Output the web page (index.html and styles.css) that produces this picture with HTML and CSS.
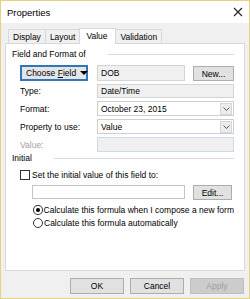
FILE: index.html
```html
<!DOCTYPE html>
<html lang="en">
<head>
  <meta charset="UTF-8">
  <title>Properties</title>
  <link rel="stylesheet" href="styles.css">
</head>
<body>
  <div class="window">
    <div class="titlebar">
      <span class="title">Properties</span>
      <svg class="close" width="10" height="10" viewBox="0 0 10 10">
        <path d="M1 1 L9 9 M9 1 L1 9" stroke="#222" stroke-width="1.1" fill="none"/>
      </svg>
    </div>

    <div class="content">
      <div class="tabs">
        <div class="tab">Display</div>
        <div class="tab">Layout</div>
        <div class="tab active">Value</div>
        <div class="tab">Validation</div>
      </div>

      <div class="panel">
        <div class="group-title"><span>Field and Format of</span><i class="rule"></i></div>

        <div class="fields">
          <div class="choose"><span>Choose <u>F</u>ield</span><span class="tri"></span></div>
          <div class="box grey">DOB</div>
          <div class="btn">New...</div>

          <div class="label">Type:</div>
          <div class="box grey wide">Date/Time</div>

          <div class="label">Format:</div>
          <div class="box select wide">October 23, 2015<span class="arrow"><svg width="7" height="4" viewBox="0 0 7 4"><path d="M0.5 0.5 L3.5 3.5 L6.5 0.5" stroke="#555" fill="none"/></svg></span></div>

          <div class="label">Property to use:</div>
          <div class="box select wide">Value<span class="arrow"><svg width="7" height="4" viewBox="0 0 7 4"><path d="M0.5 0.5 L3.5 3.5 L6.5 0.5" stroke="#555" fill="none"/></svg></span></div>

          <div class="label disabled">Value:</div>
          <div class="box disabled-box wide"></div>
        </div>

        <div class="group-title initial"><span>Initial</span><i class="rule"></i></div>

        <div class="check-row"><span class="checkbox"></span><span>Set the initial value of this field to:</span></div>

        <div class="formula-row">
          <div class="box white"></div>
          <div class="btn edit">Edit...</div>
        </div>

        <div class="radio-row"><span class="radio on"></span><span>Calculate this formula when I compose a new form</span></div>
        <div class="radio-row"><span class="radio"></span><span>Calculate this formula automatically</span></div>
      </div>

      <div class="footer">
        <div class="btn big">OK</div>
        <div class="btn big">Cancel</div>
        <div class="btn big off">Apply</div>
      </div>
    </div>
  </div>
</body>
</html>
```

FILE: styles.css
```css
* {
  box-sizing: border-box;
}
body {
  margin: 0;
  font-family: "Liberation Sans", Arial, sans-serif;
  font-size: 8.5px;
  color: #000;
  white-space: nowrap;
}
.window {
  width: 250px;
  height: 299px;
  border: 1px solid #e6d27c;
  background: #f0f0f0;
  display: flex;
  flex-direction: column;
}
.titlebar {
  height: 22px;
  background: #fff;
  display: flex;
  align-items: center;
  justify-content: space-between;
  padding: 0 6px 0 6px;
}
.title {
  font-size: 9.5px;
}
.content {
  flex: 1;
  padding: 5px 4px 0 4px;
}
.tabs {
  display: flex;
  align-items: flex-end;
  height: 15px;
  padding-left: 3px;
}
.tab {
  height: 14px;
  padding: 2px 4px 0 4px;
  border: 1px solid #d9d9d9;
  border-bottom: none;
  margin-right: -1px;
  background: #f0f0f0;
}
.tab.active {
  height: 16px;
  width: 37px;
  background: #fff;
  padding: 2px 0 0 6px;
  position: relative;
  z-index: 1;
  margin-bottom: -1px;
}
.panel {
  height: 228px;
  background: #fff;
  border: 1px solid #d9d9d9;
  padding: 4px 10px 0 6px;
}
.group-title {
  display: flex;
  align-items: center;
  height: 12px;
}
.group-title .rule {
  flex: 1;
  border-top: 1px solid #dcdcdc;
  margin-left: 22px;
}
.fields {
  display: grid;
  grid-template-columns: 69px 88px 41px;
  grid-template-rows: 16px 14px 15px 15px 15px;
  column-gap: 8px;
  row-gap: 3px;
  margin: 5px 0 0 8px;
}
.label {
  display: flex;
  align-items: center;
}
.label.disabled {
  color: #a0a0a0;
}
.choose {
  width: 68px;
  border: 2px solid #2f77b8;
  background: #e5e5e5;
  display: flex;
  align-items: center;
  padding-left: 4px;
}
.tri {
  width: 0;
  height: 0;
  border-left: 4px solid transparent;
  border-right: 4px solid transparent;
  border-top: 4px solid #000;
  margin-left: 4px;
}
.box {
  border: 1px solid #d4d4d4;
  display: flex;
  align-items: center;
  padding-left: 3px;
}
.box.grey {
  background: #f0f0f0;
}
.box.wide {
  grid-column: 2 / 4;
}
.box.select {
  background: #fff;
  border-color: #cfcfcf;
  justify-content: space-between;
  padding-right: 1px;
}
.arrow {
  width: 12px;
  height: 12px;
  background: #ececec;
  border: 1px solid #d6d6d6;
  display: flex;
  align-items: center;
  justify-content: center;
}
.box.disabled-box {
  background: #f0f0f0;
  border-color: #c9dbea;
}
.btn {
  background: #e1e1e1;
  border: 1px solid #adadad;
  display: flex;
  align-items: center;
  justify-content: center;
  height: 15px;
  margin-top: 1px;
}
.check-row {
  display: flex;
  align-items: center;
  margin: 5px 0 0 8px;
  height: 12px;
}
.checkbox {
  width: 10px;
  height: 10px;
  border: 1px solid #333;
  margin-right: 2px;
}
.formula-row {
  display: flex;
  margin: 4px 0 0 20px;
  height: 15px;
}
.formula-row .box {
  width: 153px;
  height: 14px;
  border-color: #c4c4c4;
}
.btn.edit {
  width: 39px;
  margin: 0 0 0 8px;
}
.radio-row {
  display: flex;
  align-items: center;
  height: 13px;
  margin-left: 21px;
}
.formula-row + .radio-row {
  margin-top: 3px;
}
.radio {
  width: 10px;
  height: 10px;
  border: 1px solid #333;
  border-radius: 50%;
  margin-right: 1px;
  display: flex;
  align-items: center;
  justify-content: center;
}
.radio.on::after {
  content: "";
  width: 4px;
  height: 4px;
  border-radius: 50%;
  background: #000;
}
.footer {
  display: flex;
  justify-content: flex-end;
  gap: 6px;
  padding: 7px 1px 0 0;
}
.btn.big {
  width: 54px;
  height: 16px;
  margin: 0;
}
.btn.off {
  background: #cccccc;
  border-color: #bfbfbf;
  color: #a0a0a0;
}
```
